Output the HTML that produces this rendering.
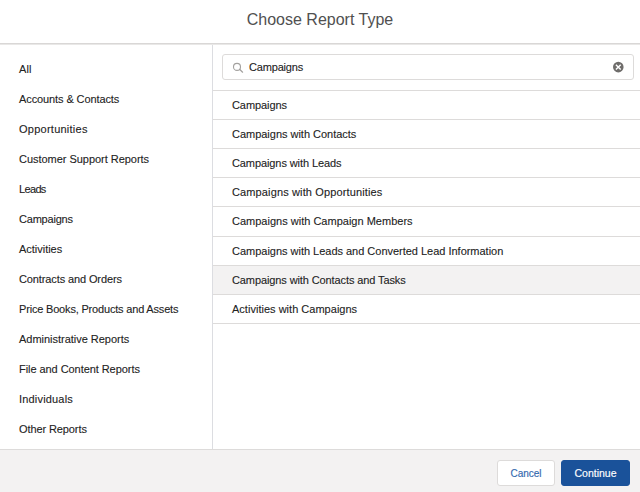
<!DOCTYPE html>
<html><head><meta charset="utf-8">
<style>
*{box-sizing:border-box;margin:0;padding:0}
html,body{width:640px;height:492px;overflow:hidden;background:#fff;font-family:"Liberation Sans",sans-serif;color:#181818}
.hdr{position:absolute;left:0;top:0;width:640px;height:44px;border-bottom:1px solid #d9d7d6;box-shadow:0 1px 0 #e9e8e7;background:#fff}
.title{position:absolute;left:0;top:12px;width:640px;text-align:center;font-size:16px;line-height:16px;color:#505050}
.left{position:absolute;left:0;top:45px;width:213px;height:404px;border-right:1px solid #dcdde1}
.t{position:absolute;font-size:11px;line-height:12px;white-space:nowrap;color:#222;-webkit-text-stroke:0.1px #222}
.li{left:19px}
.rt{left:232px}
.search{position:absolute;left:222px;top:54px;width:412px;height:26px;border:1px solid #dddbda;border-radius:3px;background:#fff}
.row{position:absolute;left:213px;width:427px;height:29px;border-top:1px solid #dddbda}
.ftr{position:absolute;left:0;top:449px;width:640px;height:43px;background:#f3f2f2;border-top:1px solid #dddbda}
.btn{position:absolute;top:460px;height:26px;border-radius:3px;font-size:10.5px;text-align:center;line-height:24px}
.cancel{left:497px;width:58px;background:#fff;border:1px solid #dddbda;color:#3167ae;font-size:10px;padding-top:1px;-webkit-text-stroke:0.15px #3167ae}
.cont{left:561px;width:69px;background:#1a529a;border:1px solid #1a529a;color:#fff;-webkit-text-stroke:0.15px #fff}
</style></head><body>
<div class="hdr"></div>
<div class="title">Choose Report Type</div>
<div class="left"></div>
<div class="t li" style="top:63px;letter-spacing:0.100px">All</div>
<div class="t li" style="top:93px;letter-spacing:-0.100px">Accounts &amp; Contacts</div>
<div class="t li" style="top:123px;letter-spacing:0.250px">Opportunities</div>
<div class="t li" style="top:153px;letter-spacing:-0.035px">Customer Support Reports</div>
<div class="t li" style="top:183px;letter-spacing:-0.650px">Leads</div>
<div class="t li" style="top:213px;letter-spacing:-0.200px">Campaigns</div>
<div class="t li" style="top:243px;letter-spacing:-0.022px">Activities</div>
<div class="t li" style="top:273px;letter-spacing:-0.116px">Contracts and Orders</div>
<div class="t li" style="top:303px;letter-spacing:-0.181px">Price Books, Products and Assets</div>
<div class="t li" style="top:333px;letter-spacing:-0.019px">Administrative Reports</div>
<div class="t li" style="top:363px;letter-spacing:-0.061px">File and Content Reports</div>
<div class="t li" style="top:393px;letter-spacing:0.180px">Individuals</div>
<div class="t li" style="top:423px;letter-spacing:-0.100px">Other Reports</div>
<div class="search"></div>
<svg style="position:absolute;left:231px;top:61px" width="14" height="14" viewBox="0 0 14 14"><circle cx="6" cy="5.9" r="3.5" fill="none" stroke="#a3a19f" stroke-width="1.1"/><line x1="8.6" y1="8.3" x2="11.6" y2="11.2" stroke="#a3a19f" stroke-width="1.2" stroke-linecap="round"/></svg>
<div class="t" style="left:249px;top:61px;letter-spacing:-0.175px">Campaigns</div>
<svg style="position:absolute;left:612px;top:61px" width="13" height="13" viewBox="0 0 13 13"><circle cx="6.3" cy="6.1" r="5.3" fill="#6f6d6b"/><path d="M3.9 3.7 L8.7 8.5 M8.7 3.7 L3.9 8.5" stroke="#fff" stroke-width="1.4" stroke-linecap="butt"/></svg>
<div class="row" style="top:90px"></div>
<div class="row" style="top:119px"></div>
<div class="row" style="top:148px"></div>
<div class="row" style="top:177px"></div>
<div class="row" style="top:206px"></div>
<div class="row" style="top:236px"></div>
<div class="row" style="top:265px;background:#f3f2f2"></div>
<div class="row" style="top:294px;height:30px;border-bottom:1px solid #dddbda"></div>
<div class="t rt" style="top:99px;letter-spacing:-0.075px">Campaigns</div>
<div class="t rt" style="top:128px;letter-spacing:-0.018px">Campaigns with Contacts</div>
<div class="t rt" style="top:157px;letter-spacing:-0.095px">Campaigns with Leads</div>
<div class="t rt" style="top:186px;letter-spacing:0.133px">Campaigns with Opportunities</div>
<div class="t rt" style="top:215px;letter-spacing:0.007px">Campaigns with Campaign Members</div>
<div class="t rt" style="top:245px;letter-spacing:-0.016px">Campaigns with Leads and Converted Lead Information</div>
<div class="t rt" style="top:274px;letter-spacing:-0.106px">Campaigns with Contacts and Tasks</div>
<div class="t rt" style="top:303px;letter-spacing:0.017px">Activities with Campaigns</div>
<div class="ftr"></div>
<div class="btn cancel">Cancel</div>
<div class="btn cont">Continue</div>
</body></html>
